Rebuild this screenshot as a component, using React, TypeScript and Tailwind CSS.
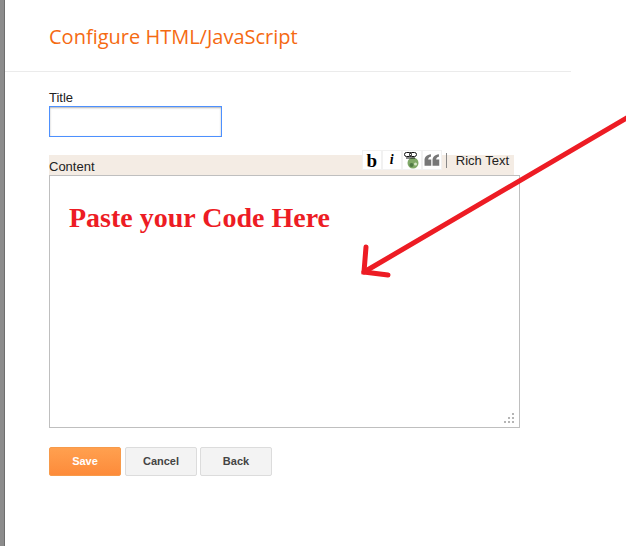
function ActionButton({ label, primary, className }: { label: string; primary?: boolean; className?: string }) {
  return (
    <button
      className={
        primary
          ? "h-[29px] w-[72px] rounded-[2px] border border-[#f79a4a] bg-gradient-to-b from-[#ffa04f] to-[#fd8b3a] text-[11px] font-bold text-white [font-family:'Liberation_Sans',Arial,sans-serif]"
          : `h-[29px] w-[72px] rounded-[2px] border border-[#dcdcdc] bg-[#f3f3f3] text-[11px] font-bold text-[#444] [font-family:'Liberation_Sans',Arial,sans-serif] ${className ?? ""}`
      }
    >
      {label}
    </button>
  );
}

function ToolButton({ children }: { children: React.ReactNode }) {
  return (
    <div className="flex h-[20px] w-[20px] items-center justify-center border border-[#f1f1f1] bg-white">
      {children}
    </div>
  );
}

export default function App() {
  return (
    <div className="relative flex h-[546px] w-[626px] overflow-hidden bg-white text-[#222] [font-family:'Liberation_Sans',Arial,sans-serif]">
      <div className="h-full w-[5px] border-r border-[#6e6e6e] bg-[#8c8c8c]" />

      <div className="w-[566px]">
        <div className="flex h-[72px] items-start border-b border-[#ebebeb] pl-[44px] pt-[22px]">
          <h1 className="text-[20px] leading-[30px] text-[#f56a12] [font-family:'Open_Sans',sans-serif]">
            Configure HTML/JavaScript
          </h1>
        </div>

        <div className="pl-[44px]">
          <label className="mt-[18px] block text-[13px] leading-[16px]">Title</label>
          <input className="block h-[31px] w-[173px] border border-[#4d90fe] bg-white shadow-[inset_0_1px_2px_rgba(0,0,0,0.3)] outline-none" />

          <div className="relative mt-[18px] flex h-[20px] w-[465px] items-start bg-[#f4ece4]">
            <span className="mt-[4px] text-[13px] leading-[15px]">Content</span>
            <div className="absolute right-[5px] top-[-5px] flex h-[20px] items-center">
              <ToolButton>
                <span className="text-[19px] font-bold leading-none text-black [font-family:'Liberation_Serif',serif]">b</span>
              </ToolButton>
              <ToolButton>
                <span className="text-[14px] font-bold italic leading-none text-black [font-family:'Liberation_Serif',serif]">i</span>
              </ToolButton>
              <ToolButton>
                <svg width="18" height="18" viewBox="0 0 18 18">
                  <circle cx="10" cy="12" r="5.5" fill="#7fa868" />
                  <circle cx="8.5" cy="14" r="2" fill="#4f7a45" />
                  <circle cx="12.5" cy="13" r="1.5" fill="#d5e6c8" />
                  <rect x="1.5" y="1.5" width="7" height="4" rx="2" fill="none" stroke="#111" strokeWidth="1" />
                  <rect x="6.5" y="1.5" width="7" height="4" rx="2" fill="none" stroke="#111" strokeWidth="1" />
                  <line x1="3" y1="7" x2="12" y2="7" stroke="#111" strokeWidth="1" />
                </svg>
              </ToolButton>
              <ToolButton>
                <svg width="16" height="12" viewBox="0 0 15 11">
                  <path d="M0.5 11V5.5C0.5 2.5 2.5 0.5 6.5 0V2.5C4.8 2.8 4 3.6 3.9 5H6.8V11Z" fill="#777" />
                  <path d="M8 11V5.5C8 2.5 10 0.5 14 0V2.5C12.3 2.8 11.5 3.6 11.4 5H14.3V11Z" fill="#777" />
                </svg>
              </ToolButton>
              <div className="ml-[4px] mr-[9px] h-[15px] w-px bg-[#888]" />
              <span className="text-[13px] leading-[15px] text-[#222]">Rich Text</span>
            </div>
          </div>

          <div className="relative h-[253px] w-[471px] border border-[#bfbfbf] bg-white pl-[19px] pt-[26px]">
            <p className="text-[28px] font-bold leading-[32px] text-[#ed1c24] [font-family:'Liberation_Serif',serif]">
              Paste your Code Here
            </p>
            <svg className="absolute bottom-[3px] right-[3px]" width="12" height="12" viewBox="0 0 12 12">
              <rect x="8" y="1" width="2" height="2" fill="#b5b5b5" />
              <rect x="4" y="5" width="2" height="2" fill="#b5b5b5" />
              <rect x="8" y="5" width="2" height="2" fill="#b5b5b5" />
              <rect x="0" y="9" width="2" height="2" fill="#b5b5b5" />
              <rect x="4" y="9" width="2" height="2" fill="#b5b5b5" />
              <rect x="8" y="9" width="2" height="2" fill="#b5b5b5" />
            </svg>
          </div>

          <div className="mt-[19px] flex gap-[4px]">
            <ActionButton label="Save" primary />
            <ActionButton label="Cancel" />
            <ActionButton label="Back" className="ml-[-1px]" />
          </div>
        </div>
      </div>

      {/* annotation arrow over the page */}
      <svg className="absolute left-0 top-0" width="626" height="546" viewBox="0 0 626 546">
        <g fill="none" stroke="#ed1c24" strokeWidth="5" strokeLinecap="round">
          <path d="M630 116L364 272" />
          <path d="M366 247L364 272L388 275" />
        </g>
      </svg>
    </div>
  );
}
